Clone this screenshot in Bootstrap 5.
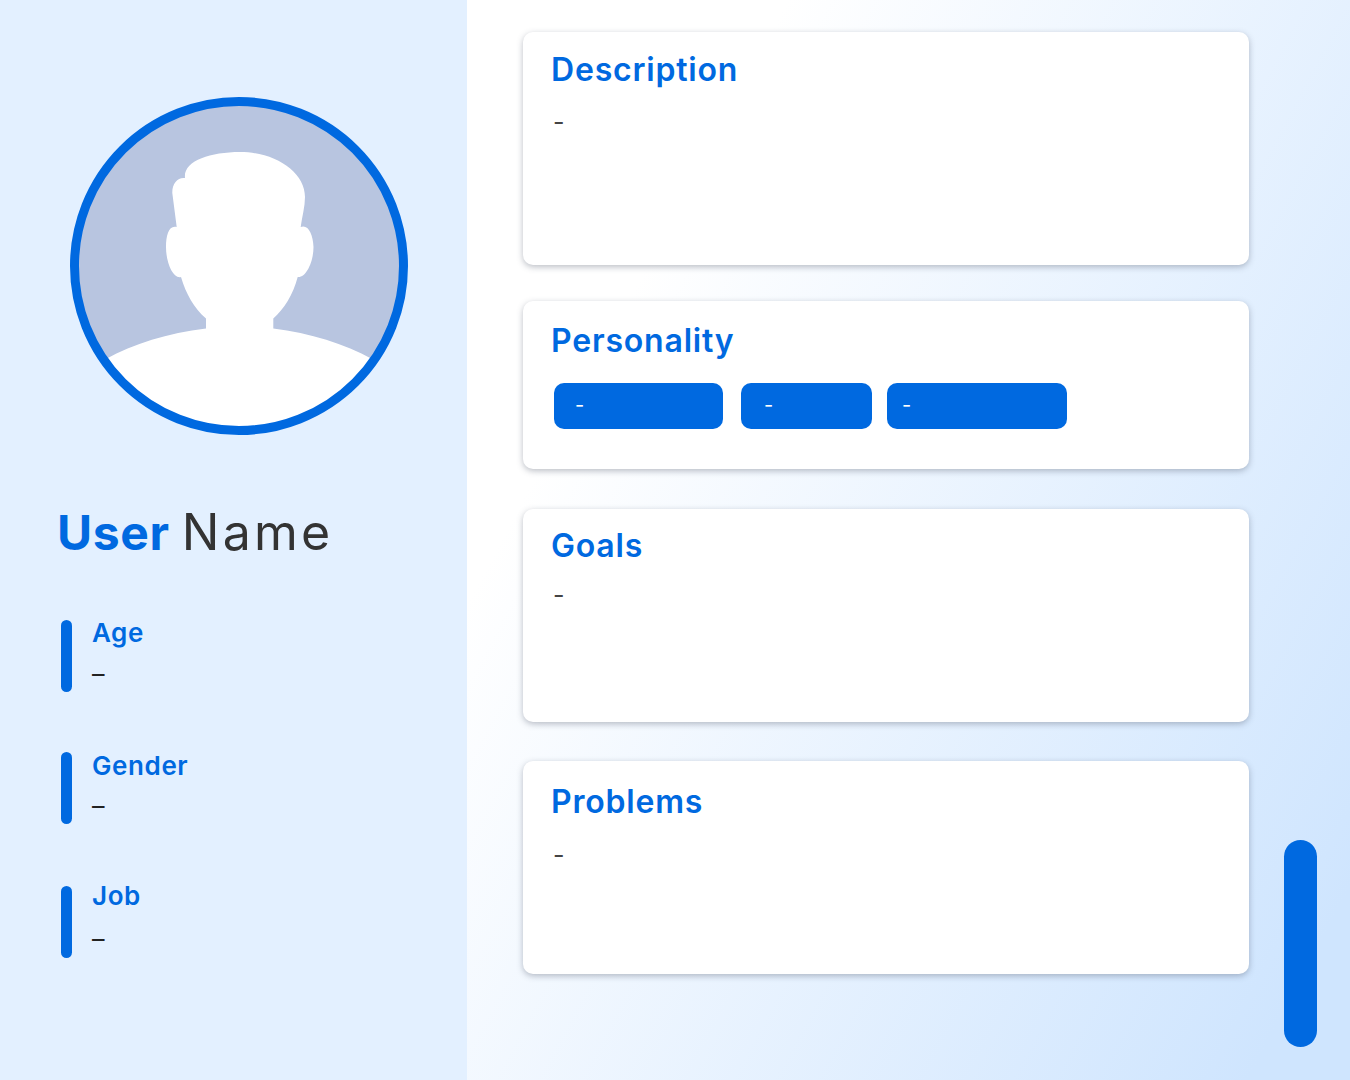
<!DOCTYPE html>
<html lang="en">
<head>
  <meta charset="UTF-8">
  <title>User profile</title>
  <link rel="stylesheet" href="https://cdn.jsdelivr.net/npm/bootstrap@5.3.3/dist/css/bootstrap.min.css">
  <style>
    body {
      font-family: "Inter", "Liberation Sans", sans-serif;
      color: #333;
      background: #fff;
    }
    .pagina { height: 1080px; overflow: hidden; }
    .lateral {
      width: 467px;
      background: #e3f0ff;
      padding: 97px 0 0 61px;
    }
    .avatar {
      display: block;
      width: 338px;
      height: 338px;
      margin-left: 9px;
    }
    .nombre {
      font-size: 50px;
      line-height: 56px;
      font-weight: 400;
      letter-spacing: 3.2px;
      word-spacing: -5px;
      margin: 69px 0 59px -4px;
      color: #333;
    }
    .nombre b { font-size: 48px; color: #0069e0; font-weight: 700; letter-spacing: .6px; }
    .dato { height: 72px; gap: 20px; margin-bottom: 60px; }
    .dato-2 { margin-bottom: 62px; }
    .dato-barra { width: 11px; height: 72px; background: #0069e0; border-radius: 6px; }
    .dato-titulo { color: #0069e0; font-size: 26px; line-height: 28px; font-weight: 600; letter-spacing: .6px; }
    .dato-valor { color: #222; font-size: 25px; line-height: 28px; margin-top: 12px; }
    .dato-1 .dato-titulo { margin-top: -1px; }
    .dato-1 .dato-valor { margin-top: 13px; }
    .dato-3 .dato-titulo { margin-top: -4px; }
    .dato-3 .dato-valor { margin-top: 15px; }
    .principal {
      background: linear-gradient(118deg, #fff 22%, #cfe5fe 93%);
      padding: 32px 0 0 56px;
    }
    .ficha {
      width: 726px;
      border: 0;
      border-radius: 10px;
      box-shadow: 0 2px 6px rgba(60, 70, 90, .35);
      padding: 17px 28px;
    }
    .ficha h2 {
      color: #0069e0;
      font-size: 32px;
      line-height: 40px;
      font-weight: 600;
      letter-spacing: .8px;
      margin: 0 0 11px;
    }
    .ficha p { color: #444; font-size: 25px; line-height: 30px; margin: 0 0 0 2px; }
    .f-desc { height: 233px; margin-bottom: 36px; }
    .f-desc h2 { margin: 1px 0 17px; }
    .f-pers { height: 168px; margin-bottom: 40px; }
    .f-pers h2 { margin: 3px 0 20px; }
    .f-goal { height: 213px; margin-bottom: 39px; }
    .f-goal h2 { margin-bottom: 14px; }
    .f-prob { height: 213px; }
    .f-prob h2 { margin: 4px 0 18px; }
    .etiquetas { margin: 2px 0 0 3px; }
    .etiqueta {
      height: 46px;
      background: #0069e0;
      color: #fff;
      font-size: 20px;
      line-height: 44px;
      border-radius: 10px;
    }
    .etiqueta-1 { width: 169px; padding-left: 21px; margin-right: 18px; }
    .etiqueta-2 { width: 131px; padding-left: 23px; margin-right: 15px; }
    .etiqueta-3 { width: 180px; padding-left: 15px; }
    .scroll-pulgar {
      position: absolute;
      left: 817px;
      top: 840px;
      width: 33px;
      height: 207px;
      background: #0069e0;
      border-radius: 17px;
    }
  </style>
</head>
<body>
  <div class="pagina d-flex">

    <!-- columna izquierda -->
    <aside class="lateral flex-shrink-0">
      <svg class="avatar" viewBox="0 0 338 338">
        <defs><clipPath id="circulo"><circle cx="169" cy="169" r="165"/></clipPath></defs>
        <circle cx="169" cy="169" r="165" fill="#b8c5e0"/>
        <g clip-path="url(#circulo)" fill="#fff">
          <path d="M115 81C113 64 140 55 170 55C205 55 235 75 235 100C235 110 232 120 230.700 130C238 127 243 137 243.500 150C243.500 165 236 181 227.700 180C223 198 214 212 203.300 221.500V231.500C240 236 275 247 302 262V345H36V262C63 247 98 236 136 231.500V221.500C124 211 116 197 111 180C103 182 96 166 96 150C96 138 99 128 106.700 130L102.300 96C102 86 108 80 115 81Z"/>
        </g>
        <circle cx="169" cy="169" r="164.500" fill="none" stroke="#0069e0" stroke-width="9"/>
      </svg>

      <h1 class="nombre"><b>User</b> Name</h1>

      <div class="dato dato-1 d-flex">
        <div class="dato-barra"></div>
        <div><div class="dato-titulo">Age</div><div class="dato-valor">–</div></div>
      </div>
      <div class="dato dato-2 d-flex">
        <div class="dato-barra"></div>
        <div><div class="dato-titulo">Gender</div><div class="dato-valor">–</div></div>
      </div>
      <div class="dato dato-3 d-flex">
        <div class="dato-barra"></div>
        <div><div class="dato-titulo">Job</div><div class="dato-valor">–</div></div>
      </div>
    </aside>

    <!-- columna derecha -->
    <main class="principal flex-grow-1 position-relative">
      <div class="card ficha f-desc">
        <h2>Description</h2>
        <p>-</p>
      </div>
      <div class="card ficha f-pers">
        <h2>Personality</h2>
        <div class="etiquetas d-flex">
          <div class="etiqueta etiqueta-1">-</div>
          <div class="etiqueta etiqueta-2">-</div>
          <div class="etiqueta etiqueta-3">-</div>
        </div>
      </div>
      <div class="card ficha f-goal">
        <h2>Goals</h2>
        <p>-</p>
      </div>
      <div class="card ficha f-prob">
        <h2>Problems</h2>
        <p>-</p>
      </div>
      <div class="scroll-pulgar"></div>
    </main>
  </div>
  <script src="https://cdn.jsdelivr.net/npm/bootstrap@5.3.3/dist/js/bootstrap.bundle.min.js"></script>
</body>
</html>
